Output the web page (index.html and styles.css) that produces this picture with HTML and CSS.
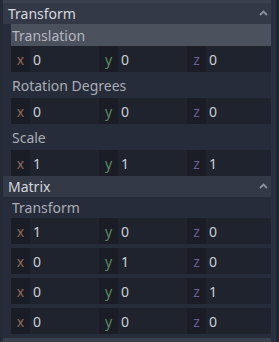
FILE: index.html
```html
<!DOCTYPE html>
<html lang="en">
  <head>
    <meta charset="UTF-8" />
    <meta name="viewport" content="width=device-width, initial-scale=1.0" />
    <title>Inspector</title>
    <link rel="stylesheet" href="styles.css">
  </head>
  <body>
    <div class="inspector">
      <div class="panel">
        <div class="top-strip"></div>

        <div class="section-header">
          <span>Transform</span>
          <svg class="chevron" width="9" height="6" viewBox="0 0 9 6">
            <path d="M1 5 L4.5 1.5 L8 5" fill="none" stroke="#8c919c" stroke-width="1.8" />
          </svg>
        </div>
        <div class="section-body">
          <div class="prop-label selected">Translation</div>
          <div class="vec-row">
            <div class="field"><span class="axis ax-x">x</span><span class="val">0</span></div>
            <div class="field"><span class="axis ax-y">y</span><span class="val">0</span></div>
            <div class="field"><span class="axis ax-z">z</span><span class="val">0</span></div>
          </div>
          <div class="prop-label">Rotation Degrees</div>
          <div class="vec-row">
            <div class="field"><span class="axis ax-x">x</span><span class="val">0</span></div>
            <div class="field"><span class="axis ax-y">y</span><span class="val">0</span></div>
            <div class="field"><span class="axis ax-z">z</span><span class="val">0</span></div>
          </div>
          <div class="prop-label">Scale</div>
          <div class="vec-row">
            <div class="field"><span class="axis ax-x">x</span><span class="val">1</span></div>
            <div class="field"><span class="axis ax-y">y</span><span class="val">1</span></div>
            <div class="field"><span class="axis ax-z">z</span><span class="val">1</span></div>
          </div>
        </div>

        <div class="section-header">
          <span>Matrix</span>
          <svg class="chevron" width="9" height="6" viewBox="0 0 9 6">
            <path d="M1 5 L4.5 1.5 L8 5" fill="none" stroke="#8c919c" stroke-width="1.8" />
          </svg>
        </div>
        <div class="section-body">
          <div class="prop-label short">Transform</div>
          <div class="matrix">
            <div class="vec-row">
              <div class="field"><span class="axis ax-x">x</span><span class="val">1</span></div>
              <div class="field"><span class="axis ax-y">y</span><span class="val">0</span></div>
              <div class="field"><span class="axis ax-z">z</span><span class="val">0</span></div>
            </div>
            <div class="vec-row">
              <div class="field"><span class="axis ax-x">x</span><span class="val">0</span></div>
              <div class="field"><span class="axis ax-y">y</span><span class="val">1</span></div>
              <div class="field"><span class="axis ax-z">z</span><span class="val">0</span></div>
            </div>
            <div class="vec-row">
              <div class="field"><span class="axis ax-x">x</span><span class="val">0</span></div>
              <div class="field"><span class="axis ax-y">y</span><span class="val">0</span></div>
              <div class="field"><span class="axis ax-z">z</span><span class="val">1</span></div>
            </div>
            <div class="vec-row">
              <div class="field"><span class="axis ax-x">x</span><span class="val">0</span></div>
              <div class="field"><span class="axis ax-y">y</span><span class="val">0</span></div>
              <div class="field"><span class="axis ax-z">z</span><span class="val">0</span></div>
            </div>
          </div>
        </div>
        <div class="bottom-strip"></div>
      </div>
      <div class="scrollbar"></div>
    </div>
  </body>
</html>
```

FILE: styles.css
```css
html,
body {
  margin: 0;
  padding: 0;
}

body {
  width: 279px;
  height: 342px;
  overflow: hidden;
  background: #252a37;
  font-family: "Noto Sans", "DejaVu Sans", sans-serif;
  font-size: 14px;
}

.inspector {
  display: flex;
  flex-direction: row;
  height: 342px;
  padding-left: 3px;
}

.panel {
  display: flex;
  flex-direction: column;
  width: 268px;
  background: #272c3a;
}

.top-strip {
  height: 3px;
  background: #3a404e;
}

.bottom-strip {
  height: 4px;
  margin-top: 4px;
  background: #3a404d;
}

.scrollbar {
  width: 5px;
  background: #283042;
  border-right: 3px solid #202531;
}

.section-header {
  display: flex;
  justify-content: space-between;
  align-items: center;
  height: 23px;
  padding: 0 3px 0 5px;
  background: #333947;
  color: #d6d8dc;
}

.chevron {
  display: block;
  margin-top: -1px;
}

.section-body {
  display: flex;
  flex-direction: column;
  padding-left: 8px;
}

.prop-label {
  display: flex;
  align-items: center;
  height: 26px;
  padding-left: 1px;
  color: #a9adb5;
}

.prop-label.selected {
  height: 22px;
  background: #4c515e;
  color: #b4b7be;
}

.prop-label.short {
  height: 21px;
}

.vec-row {
  display: grid;
  grid-template-columns: repeat(3, 1fr);
  column-gap: 4px;
  height: 26px;
  background: #1f232d;
}

.matrix {
  display: flex;
  flex-direction: column;
  gap: 4px;
}

.field {
  display: flex;
  align-items: center;
}

.axis {
  display: flex;
  align-items: center;
  justify-content: center;
  width: 19px;
  height: 100%;
  background: #1a1d26;
}

.ax-x {
  color: #8e6b5a;
}

.ax-y {
  color: #5c8b5f;
}

.ax-z {
  color: #6a5c9b;
}

.val {
  padding-left: 3px;
  color: #cdd0d6;
}
```
